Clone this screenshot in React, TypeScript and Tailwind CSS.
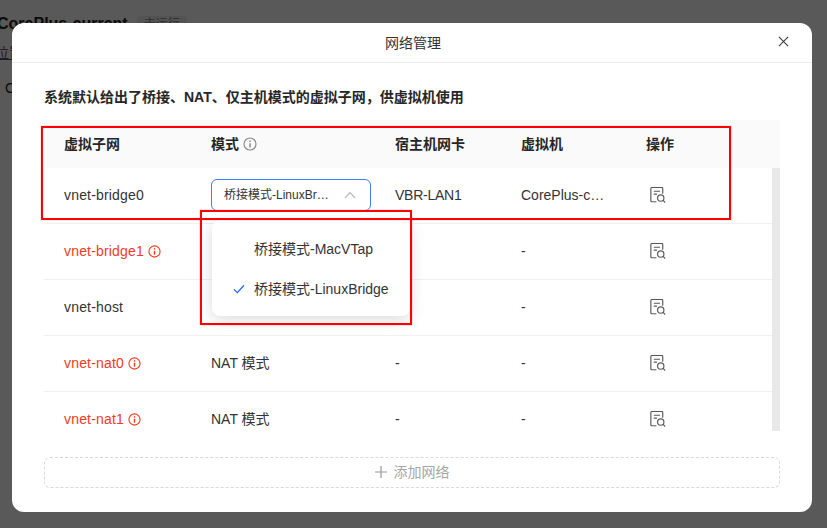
const fontStack = { fontFamily: '"Liberation Sans", "Noto Sans CJK SC", sans-serif' };

function InfoIcon({ className }: { className: string }) {
  return (
    <svg viewBox="0 0 14 14" fill="none" stroke="currentColor" className={className}>
      <circle cx="7" cy="7" r="6" strokeWidth="1.2" />
      <path d="M7 6.2v4.2" strokeWidth="1.5" />
      <path d="M7 3.4v1.6" strokeWidth="1.5" />
    </svg>
  );
}

function DetailIcon() {
  return (
    <svg viewBox="0.5 0.5 15 15.2" fill="none" stroke="#595959" strokeWidth="1.1" className="w-4 h-4 ml-[4px]">
      <path d="M6.5 14.5H2.2a1 1 0 0 1-1-1V2a1 1 0 0 1 1-1h9.3a1 1 0 0 1 1 1v5" />
      <path d="M4 4.5h6M4 7.2h3" />
      <circle cx="10.6" cy="11" r="3" />
      <path d="M12.8 13.2l2 2" />
    </svg>
  );
}

type Row = {
  name: string;
  error?: boolean;
  mode?: string;
  host?: string;
  vm?: string;
};

const rows: Row[] = [
  { name: "vnet-bridge0", host: "VBR-LAN1", vm: "CorePlus-c…" },
  { name: "vnet-bridge1", error: true, vm: "-" },
  { name: "vnet-host", vm: "-" },
  { name: "vnet-nat0", error: true, mode: "NAT 模式", host: "-", vm: "-" },
  { name: "vnet-nat1", error: true, mode: "NAT 模式", host: "-", vm: "-" },
];

const gridCols = "grid grid-cols-[147px_184px_126px_125px_1fr] items-center";

function NetworkTable() {
  return (
    <div className="mt-[13px] h-[311px] overflow-hidden">
      <div className={`${gridCols} h-12 bg-[#fafafa] text-sm font-bold text-[#262626]`}>
        <div className="pl-5">虚拟子网</div>
        <div className="pl-5 flex items-center gap-1">
          模式
          <InfoIcon className="w-[14px] h-[14px] text-[#8c8c8c]" />
        </div>
        <div className="pl-5">宿主机网卡</div>
        <div className="pl-5">虚拟机</div>
        <div className="pl-5">操作</div>
      </div>
      <div className="flex h-[263px]">
        <div className="flex-1 min-w-0">
          {rows.map((row, i) => (
            <div
              key={row.name}
              className={`${gridCols} h-14 pb-[1px] border-b border-[#f0f0f0] text-sm text-[#333333]`}
            >
              <div className={`pl-5 flex items-center gap-1 ${row.error ? "text-[#f5391c]" : ""}`}>
                <span className="tracking-[0.17px]">{row.name}</span>
                {row.error && <InfoIcon className="w-[13px] h-[13px]" />}
              </div>
              <div className="pl-5">
                {i === 0 ? (
                  <div className="w-40 h-8 rounded-md border border-[#4080ff] flex items-center justify-between pl-3 pr-[14px] text-xs">
                    <span>桥接模式-LinuxBr…</span>
                    <svg viewBox="0 0 12 8" fill="none" stroke="#bfbfbf" strokeWidth="1.3" className="w-3 h-2">
                      <path d="M1 7l5-5.5L11 7" />
                    </svg>
                  </div>
                ) : (
                  row.mode
                )}
              </div>
              <div className={`pl-5 ${i === 0 ? "tracking-[-0.25px]" : ""}`}>{row.host}</div>
              <div className="pl-5">{row.vm}</div>
              <div className="pl-5">
                <DetailIcon />
              </div>
            </div>
          ))}
        </div>
        <div className="w-2 bg-[#e8e8e8]" />
      </div>
    </div>
  );
}

function ModeMenu() {
  return (
    <div className="absolute left-[200px] top-[197px] w-[198px] h-[96px] rounded-lg bg-white shadow-[0_4px_16px_rgba(0,0,0,0.14)] text-sm text-[#333333] pt-[9px]">
      <div className="h-10 flex items-center pl-[42px]">桥接模式-MacVTap</div>
      <div className="h-10 flex items-center">
        <svg viewBox="0 0 14 12" fill="none" stroke="#1664ff" strokeWidth="1.4" className="w-3 h-[10px] ml-[21px] mr-[9px]">
          <path d="M1 6.5l4 4L13 1.5" />
        </svg>
        桥接模式-LinuxBridge
      </div>
    </div>
  );
}

export default function App() {
  return (
    <div className="relative w-[827px] h-[528px] overflow-hidden bg-white" style={fontStack}>
      {/* page behind the dialog */}
      <div className="h-full pt-[12px] text-[#222222]">
        <div className="flex items-center gap-[9px] -ml-[3px]">
          <span className="text-base leading-6 font-bold">CorePlus-current</span>
          <span className="px-[7px] rounded bg-[#eeeeee] text-xs text-[#888888]">未运行</span>
        </div>
        <div className="mt-[7px] -ml-[5px] text-sm text-[#555555] underline">位置</div>
        <div className="mt-[15px] ml-[5px] text-sm">C</div>
      </div>
      <div className="absolute inset-0 bg-black/65" />

      {/* dialog */}
      <div className="absolute left-3 top-[23px] w-[800px] h-[489px] rounded-xl bg-white">
        <div className="relative h-10 pl-[2px] border-b border-[#ebebeb] flex items-center justify-center text-sm text-[#333333]">
          网络管理
          <svg viewBox="0 0 12 12" fill="none" stroke="#333333" strokeWidth="1.1" className="absolute right-[23px] top-[13px] w-[11px] h-[11px]">
            <path d="M1 1l10 10M11 1L1 11" />
          </svg>
        </div>
        <div className="px-8 pt-6">
          <div className="text-sm leading-5 font-bold text-[#262626]">
            系统默认给出了桥接、NAT、仅主机模式的虚拟子网，供虚拟机使用
          </div>
          <NetworkTable />
          <div className="mt-[26px] h-[31px] pb-[2px] rounded-md border border-dashed border-[#d9d9d9] flex items-center justify-center gap-[7px] text-sm text-[#a6a6a6]">
            <svg viewBox="0 0 12 12" fill="none" stroke="#999999" strokeWidth="1.2" className="w-3 h-3">
              <path d="M6 0v12M0 6h12" />
            </svg>
            添加网络
          </div>
        </div>
        <ModeMenu />
      </div>

      {/* red annotation boxes */}
      <div className="absolute left-[41px] top-[126px] w-[690px] h-[94px] border-2 border-[#ff0000] shadow-[0_0_1px_rgba(255,0,0,0.5)]" />
      <div className="absolute left-[200px] top-[210px] w-[212px] h-[115px] border-2 border-[#ff0000] shadow-[0_0_1px_rgba(255,0,0,0.5)]" />
    </div>
  );
}
